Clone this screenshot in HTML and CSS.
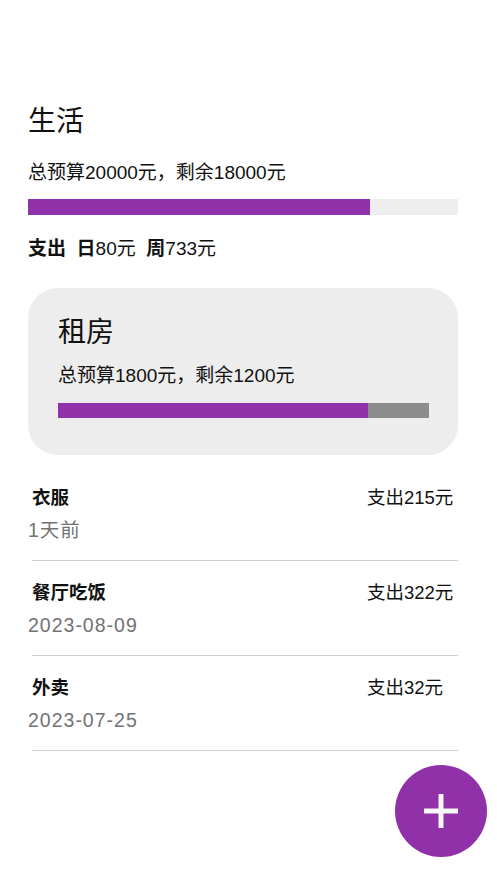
FILE: index.html
```html
<!DOCTYPE html>
<html lang="zh-CN">
<head>
    <meta charset="UTF-8">
    <meta name="viewport" content="width=device-width, initial-scale=1.0">
    <title>预算</title>
    <link rel="stylesheet" href="styles.css">
</head>
<body>
    <div class="page">
        <h1 class="budget-title">生活</h1>
        <div class="budget-summary">总预算20000元，剩余18000元</div>
        <div class="bar">
            <div class="bar-fill" style="width: 79.5%"></div>
        </div>
        <div class="spend">
            <b>支出</b>&nbsp;&nbsp;<b>日</b>80元&nbsp;&nbsp;<b>周</b>733元
        </div>

        <div class="card">
            <h2 class="card-title">租房</h2>
            <div class="budget-summary">总预算1800元，剩余1200元</div>
            <div class="bar bar-dark">
                <div class="bar-fill" style="width: 83.6%"></div>
            </div>
        </div>

        <div class="entries">
            <div class="entry">
                <div class="entry-head">
                    <span class="entry-name">衣服</span>
                    <span class="entry-amount">支出215元</span>
                </div>
                <div class="entry-date">1天前</div>
            </div>
            <div class="divider"></div>
            <div class="entry">
                <div class="entry-head">
                    <span class="entry-name">餐厅吃饭</span>
                    <span class="entry-amount">支出322元</span>
                </div>
                <div class="entry-date">2023-08-09</div>
            </div>
            <div class="divider"></div>
            <div class="entry">
                <div class="entry-head">
                    <span class="entry-name">外卖</span>
                    <span class="entry-amount">支出32元</span>
                </div>
                <div class="entry-date">2023-07-25</div>
            </div>
            <div class="divider"></div>
        </div>
    </div>

    <button class="fab" aria-label="添加">
        <svg width="34" height="34" viewBox="0 0 34 34">
            <path d="M17 0 V34 M0 17 H34" stroke="#f7f7f7" stroke-width="5" fill="none"/>
        </svg>
    </button>
</body>
</html>
```

FILE: styles.css
```css
body {
    margin: 0;
    font-family: "Liberation Sans", "Noto Sans CJK SC", sans-serif;
    color: #111;
    background: #fff;
}
.page {
    padding: 104px 39px 40px 28px;
}
.budget-title {
    margin: 0;
    font-size: 28px;
    line-height: 36px;
    font-weight: normal;
}
.budget-summary {
    margin-top: 20px;
    font-size: 19px;
    line-height: 26px;
}
.bar {
    margin-top: 13px;
    height: 16px;
    background: #eeeeee;
}
.bar-dark {
    background: #8c8c8c;
}
.bar-fill {
    height: 100%;
    background: #9031aa;
}
.spend {
    margin-top: 21px;
    font-size: 19px;
    line-height: 26px;
}
.spend b {
    font-weight: bold;
}
.card {
    margin-top: 26px;
    padding: 28px 29px 37px 30px;
    background: #ededed;
    border-radius: 30px;
}
.card-title {
    margin: 0;
    font-size: 28px;
    line-height: 34px;
    font-weight: normal;
}
.card .budget-summary {
    margin-top: 13px;
}
.card .bar {
    margin-top: 14px;
    height: 15px;
}
.entries {
    margin-top: 11px;
}
.entry {
    padding: 19px 0 17px;
}
.entry-head {
    display: grid;
    grid-template-columns: 1fr 91px;
    padding-left: 4px;
    font-size: 18.5px;
    line-height: 26px;
}
.entry-name {
    font-weight: bold;
}
.entry-date {
    margin-top: 6px;
    font-size: 19.5px;
    line-height: 26px;
    letter-spacing: 1px;
    color: #737373;
}
.divider {
    margin-left: 4px;
    height: 1px;
    background: #cfcfcf;
}
.fab {
    position: fixed;
    right: 10px;
    bottom: 26px;
    width: 92px;
    height: 92px;
    border: none;
    border-radius: 50%;
    background: #9031aa;
    display: flex;
    align-items: center;
    justify-content: center;
    padding: 0;
    cursor: pointer;
}
```
